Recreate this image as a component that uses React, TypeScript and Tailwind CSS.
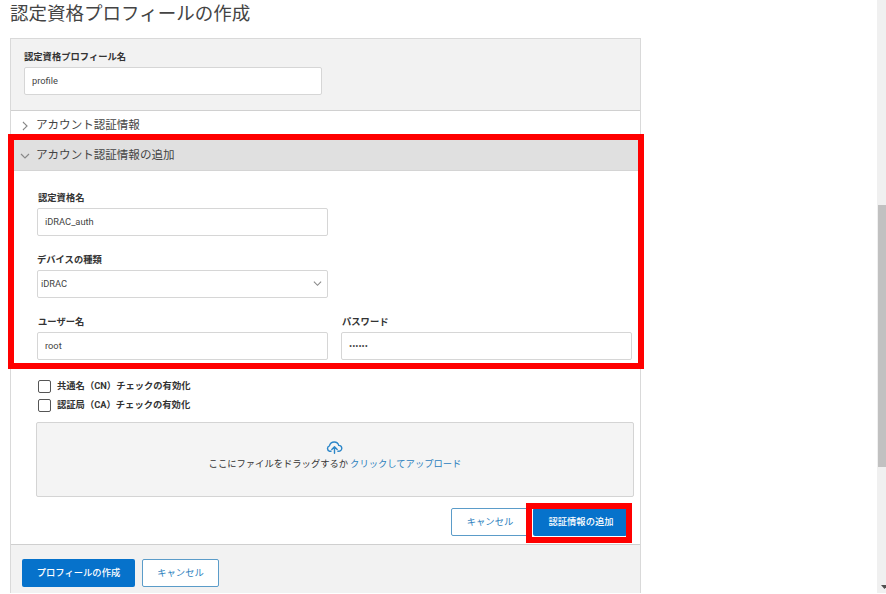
import { useState } from "react";

interface FieldProps {
  label: string;
  value: string;
  type?: string;
}

function Field({ label, value, type = "text" }: FieldProps) {
  const [text, setText] = useState(value);

  return (
    <label className="block w-[291px]">
      <span className="block h-[17px] pl-px text-[9.3px] leading-[14px] font-bold text-[#333]">{label}</span>
      <input
        type={type}
        value={text}
        onChange={(e) => setText(e.target.value)}
        className="block h-7 w-full rounded-[2px] border border-[#d6d6d6] bg-white px-[7px] pb-px text-[9.3px] text-[#444] outline-none"
      />
    </label>
  );
}

function Chevron({ className }: { className?: string }) {
  return (
    <svg viewBox="0 0 10 10" className={className} fill="none" stroke="currentColor" strokeWidth="1.2">
      <path d="M1 3l4 4 4-4" />
    </svg>
  );
}

function CloudUpload() {
  return (
    <svg
      viewBox="0 0 17 13"
      className="mr-[2px] h-[13px] w-[17px] text-[#2b86c9]"
      fill="none"
      stroke="currentColor"
      strokeWidth="1.4"
      strokeLinecap="round"
      strokeLinejoin="round"
    >
      <path d="M5 10.3H3.6A2.9 2.9 0 0 1 3.4 4.8C4.2 2.3 6 1 8.2 1c2.3 0 4 1.3 4.5 3.4a2.9 2.9 0 0 1 1.2 5.6l-1.9.3" />
      <path d="M8.5 12.2V6M5.8 8.5l2.7-2.7 2.7 2.7" />
    </svg>
  );
}

function Checkbox({ label }: { label: string }) {
  return (
    <label className="flex h-[19px] items-center gap-[6px] pl-px text-[9.3px] font-bold text-[#333]">
      <input
        type="checkbox"
        className="mt-px h-[13px] w-[13px] appearance-none rounded-[2px] border border-[#555] bg-white checked:bg-[#0672cb]"
      />
      <span className="leading-[13px]">{label}</span>
    </label>
  );
}

export default function App() {
  return (
    <div className="relative flex h-[593px] w-[886px] overflow-hidden bg-white font-['Roboto','Noto_Sans_CJK_JP',sans-serif] text-[#444]">
      <main className="w-[877px] pl-[10px]">
        <h1 className="h-[38px] text-[18.5px] leading-[28px] whitespace-nowrap font-normal text-[#444]">
          認定資格プロフィールの作成
        </h1>

        <div className="flex h-[555px] w-[631px] flex-col border border-b-0 border-[#d9d9d9]">
          <section className="h-[72px] border-b border-[#d0d0d0] bg-[#f2f2f2] pt-[11px] pl-[13px]">
            <label className="block w-[298px]">
              <span className="block h-[17px] text-[9.3px] leading-[13px] font-bold text-[#333]">
                認定資格プロフィール名
              </span>
              <input
                defaultValue="profile"
                className="block h-7 w-full rounded-[2px] border border-[#d6d6d6] bg-white px-[7px] pb-px text-[9.3px] text-[#444] outline-none"
              />
            </label>
          </section>

          <button className="flex h-[29px] shrink-0 items-center gap-[6px] pt-px pl-[9px] text-[11.55px]">
            <Chevron className="h-[10px] w-[10px] -rotate-90 text-[#888]" />
            アカウント認証情報
          </button>
          <button className="flex h-[31px] shrink-0 items-center gap-[6px] border-b border-[#d4d4d4] bg-[#e0e0e0] pt-[2px] pl-[9px] text-[11.55px]">
            <Chevron className="h-[10px] w-[10px] text-[#888]" />
            アカウント認証情報の追加
          </button>

          <div className="h-[373px] shrink-0 pt-5 pl-[26px]">
            <div className="flex flex-col gap-[17px]">
              <Field label="認定資格名" value="iDRAC_auth" />
              <div className="w-[291px]">
                <div className="h-[17px] text-[9.3px] leading-[14px] font-bold text-[#333]">デバイスの種類</div>
                <button className="flex h-7 w-full items-center justify-between rounded-[2px] border border-[#d6d6d6] bg-white pr-[5px] pb-px pl-[3px] text-[9.3px] text-[#444]">
                  iDRAC
                  <Chevron className="h-[9px] w-[9px] text-[#888]" />
                </button>
              </div>
              <div className="flex gap-[13px]">
                <Field label="ユーザー名" value="root" />
                <Field label="パスワード" value="······" type="password" />
              </div>
            </div>

            <div className="mt-4">
              <Checkbox label="共通名（CN）チェックの有効化" />
              <Checkbox label="認証局（CA）チェックの有効化" />
            </div>

            <div className="mt-2 -ml-px flex h-[75px] w-[598px] flex-col items-center rounded-[2px] border border-[#d4d4d4] bg-[#f4f4f4] pt-[18px] text-[9.3px]">
              <CloudUpload />
              <p className="flex gap-[2px] leading-[19px] text-[#333]">
                ここにファイルをドラッグするか
                <a href="#" className="text-[#2b80bd]">
                  クリックしてアップロード
                </a>
              </p>
            </div>

            <div className="mt-[11px] flex w-[590px] justify-end gap-1 text-[9.3px]">
              <button className="h-7 w-[78px] rounded-[2px] border border-[#5b9cc9] pb-px text-[#2b80bd]">
                キャンセル
              </button>
              <button className="h-7 w-[94px] rounded-[2px] bg-[#0672cb] pr-0 pb-px pl-[2px] font-medium text-white">
                認証情報の追加
              </button>
            </div>
          </div>

          <footer className="flex flex-1 gap-[7px] border-t border-[#cfcfcf] bg-[#f2f2f2] pt-[14px] pl-[11px] text-[9.3px]">
            <button className="h-7 w-[113px] rounded-[2px] bg-[#0672cb] pb-px font-medium text-white">
              プロフィールの作成
            </button>
            <button className="h-7 w-[77px] rounded-[2px] border border-[#5b9cc9] bg-white pb-px text-[#2b80bd]">
              キャンセル
            </button>
          </footer>
        </div>
      </main>

      {/* scrollbar, cut off by the right edge */}
      <div className="flex w-[9px] flex-col items-end bg-[#f0f0f0] pt-[205px]">
        <div className="h-[262px] w-2 bg-[#c1c1c1]" />
        <svg viewBox="0 0 5 4" className="mt-[118px] h-1 w-[5px] fill-[#505050]">
          <path d="M0 0h7L3.5 4z" />
        </svg>
      </div>

      {/* callouts */}
      <div className="pointer-events-none absolute top-[134px] left-2 h-[235px] w-[636px] border-6 border-[#ff0000]" />
      <div className="pointer-events-none absolute top-[503px] left-[526px] h-10 w-[106px] border-6 border-[#ff0000]" />
    </div>
  );
}
